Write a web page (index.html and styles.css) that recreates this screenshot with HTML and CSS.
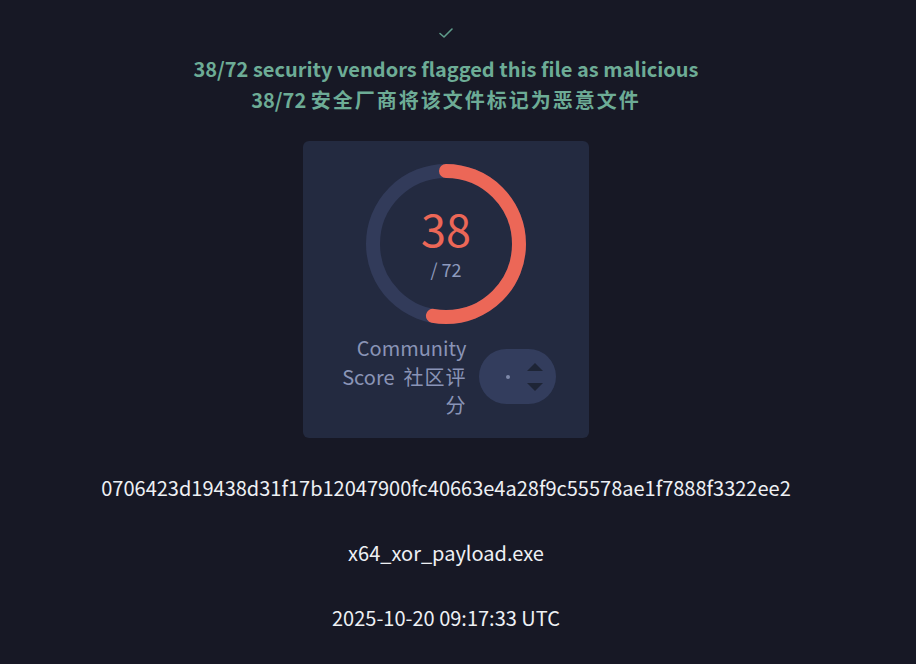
FILE: index.html
```html
<!DOCTYPE html>
<html lang="en">
<head>
    <meta charset="UTF-8">
    <meta name="viewport" content="width=device-width, initial-scale=1.0">
    <title>File Report</title>
    <link rel="stylesheet" href="styles.css">
</head>
<body>
    <div class="report">
        <svg class="check" width="16" height="12" viewBox="0 0 16 12">
            <path d="M2 6.5 L6 10 L14 2" fill="none" stroke="#5f9c8b" stroke-width="1.6" stroke-linecap="round" stroke-linejoin="round"/>
        </svg>

        <h1 class="verdict">
            38/72 security vendors flagged this file as malicious<br>
            38/72 <span class="zh">安全厂商将该文件标记为恶意文件</span>
        </h1>

        <div class="score-card">
            <div class="ring">
                <svg width="160" height="160" viewBox="0 0 160 160">
                    <circle cx="80" cy="80" r="73" fill="none" stroke="#323b5a" stroke-width="14"/>
                    <!-- 38 of 72 -->
                    <circle cx="80" cy="80" r="73" fill="none" stroke="#ec6757" stroke-width="14"
                        stroke-linecap="round" stroke-dasharray="242.1 458.7" transform="rotate(-90 80 80)"/>
                </svg>
                <div class="ring-text">
                    <div class="ring-count">38</div>
                    <div class="ring-total">/ 72</div>
                </div>
            </div>

            <div class="community">
                <div class="community-label">Community Score&nbsp; <span class="zh">社区评分</span></div>
                <div class="vote">
                    <span class="vote-dot"></span>
                    <span class="vote-arrows">
                        <span class="arrow up"></span>
                        <span class="arrow down"></span>
                    </span>
                </div>
            </div>
        </div>

        <div class="meta">0706423d19438d31f17b12047900fc40663e4a28f9c55578ae1f7888f3322ee2</div>
        <div class="meta">x64_xor_payload.exe</div>
        <div class="meta">2025-10-20 09:17:33 UTC</div>
    </div>
</body>
</html>
```

FILE: styles.css
```css
body {
    margin: 0;
    background: #171825;
    font-family: "Noto Sans CJK SC", "Noto Sans", sans-serif;
    color: #eef0f4;
}
.report {
    display: flex;
    flex-direction: column;
    align-items: center;
    padding: 27px 24px 0 0;
}
.zh { letter-spacing: 2px; }
.check { display: block; }
.verdict {
    margin: 14px 0 0;
    font-size: 20px;
    font-weight: 700;
    line-height: 31px;
    color: #6dac96;
    text-align: center;
}
.score-card {
    margin-top: 26px;
    width: 286px;
    height: 297px;
    box-sizing: border-box;
    padding-top: 23px;
    background: #232a40;
    border-radius: 6px;
    display: flex;
    flex-direction: column;
    align-items: center;
}
.ring {
    position: relative;
    width: 160px;
    height: 160px;
}
.ring svg { display: block; }
.ring-text {
    position: absolute;
    inset: 0;
    display: flex;
    flex-direction: column;
    align-items: center;
    justify-content: center;
}
.ring-count {
    font-size: 45px;
    line-height: 44px;
    color: #ec6757;
    margin-top: -2px;
}
.ring-total {
    font-size: 18px;
    line-height: 22px;
    color: #8e9abd;
    margin-top: 8px;
}
.community {
    margin-top: 10px;
    display: flex;
    align-items: center;
    gap: 12px;
}
.community-label {
    width: 130px;
    text-align: right;
    font-size: 20px;
    line-height: 28.5px;
    color: #8a94b6;
}
.community-label .zh { letter-spacing: 1px; }
.vote {
    width: 77px;
    height: 55px;
    border-radius: 28px;
    background: #333d5d;
    display: flex;
    align-items: center;
    justify-content: space-between;
    padding: 0 13px 0 27px;
    box-sizing: border-box;
}
.vote-dot {
    width: 4px;
    height: 4px;
    border-radius: 50%;
    background: #7f89a9;
}
.vote-arrows {
    display: flex;
    flex-direction: column;
    gap: 12px;
}
.arrow {
    width: 0;
    height: 0;
    border-left: 8px solid transparent;
    border-right: 8px solid transparent;
}
.arrow.up { border-bottom: 8px solid #1e2536; }
.arrow.down { border-top: 8px solid #1e2536; }
.meta {
    font-size: 20px;
    line-height: 26px;
    text-align: center;
}
.score-card + .meta { margin-top: 37px; }
.meta + .meta { margin-top: 39px; }
```
